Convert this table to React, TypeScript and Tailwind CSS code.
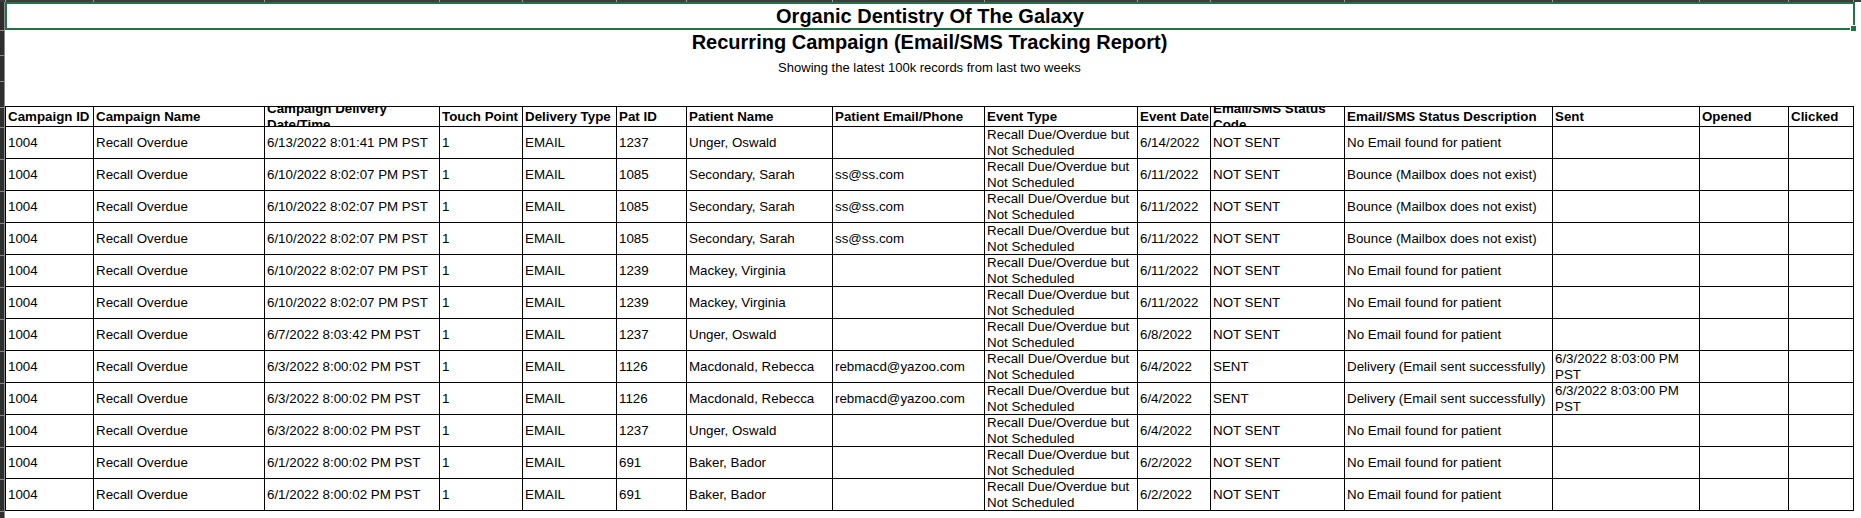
import React from "react";

// sheet column widths (px, each includes its right border)
const COLS =
  "grid-cols-[88px_171px_175px_83px_94px_70px_146px_152px_153px_73px_134px_208px_147px_89px_65px]";
const BAR_COLS =
  "grid-cols-[6px_88px_171px_175px_83px_94px_70px_146px_152px_153px_73px_134px_208px_147px_89px_65px_1fr]";

const HEAD = [
  "Campaign ID",
  "Campaign Name",
  "Campaign Delivery Date/Time",
  "Touch Point",
  "Delivery Type",
  "Pat ID",
  "Patient Name",
  "Patient Email/Phone",
  "Event Type",
  "Event Date",
  "Email/SMS Status Code",
  "Email/SMS Status Description",
  "Sent",
  "Opened",
  "Clicked",
];

type Row = {
  delivered: string;
  patId: string;
  name: string;
  email: string;
  eventDate: string;
  code: string;
  desc: string;
  sent?: string[];
};

const EVENT = "Recall Due/Overdue but Not Scheduled";
const NO_EMAIL = "No Email found for patient";
const BOUNCE = "Bounce (Mailbox does not exist)";
const DELIVERY = "Delivery (Email sent successfully)";

const ROWS: Row[] = [
  { delivered: "6/13/2022 8:01:41 PM PST", patId: "1237", name: "Unger, Oswald", email: "", eventDate: "6/14/2022", code: "NOT SENT", desc: NO_EMAIL },
  { delivered: "6/10/2022 8:02:07 PM PST", patId: "1085", name: "Secondary, Sarah", email: "ss@ss.com", eventDate: "6/11/2022", code: "NOT SENT", desc: BOUNCE },
  { delivered: "6/10/2022 8:02:07 PM PST", patId: "1085", name: "Secondary, Sarah", email: "ss@ss.com", eventDate: "6/11/2022", code: "NOT SENT", desc: BOUNCE },
  { delivered: "6/10/2022 8:02:07 PM PST", patId: "1085", name: "Secondary, Sarah", email: "ss@ss.com", eventDate: "6/11/2022", code: "NOT SENT", desc: BOUNCE },
  { delivered: "6/10/2022 8:02:07 PM PST", patId: "1239", name: "Mackey, Virginia", email: "", eventDate: "6/11/2022", code: "NOT SENT", desc: NO_EMAIL },
  { delivered: "6/10/2022 8:02:07 PM PST", patId: "1239", name: "Mackey, Virginia", email: "", eventDate: "6/11/2022", code: "NOT SENT", desc: NO_EMAIL },
  { delivered: "6/7/2022 8:03:42 PM PST", patId: "1237", name: "Unger, Oswald", email: "", eventDate: "6/8/2022", code: "NOT SENT", desc: NO_EMAIL },
  { delivered: "6/3/2022 8:00:02 PM PST", patId: "1126", name: "Macdonald, Rebecca", email: "rebmacd@yazoo.com", eventDate: "6/4/2022", code: "SENT", desc: DELIVERY, sent: ["6/3/2022 8:03:00 PM", "PST"] },
  { delivered: "6/3/2022 8:00:02 PM PST", patId: "1126", name: "Macdonald, Rebecca", email: "rebmacd@yazoo.com", eventDate: "6/4/2022", code: "SENT", desc: DELIVERY, sent: ["6/3/2022 8:03:00 PM", "PST"] },
  { delivered: "6/3/2022 8:00:02 PM PST", patId: "1237", name: "Unger, Oswald", email: "", eventDate: "6/4/2022", code: "NOT SENT", desc: NO_EMAIL },
  { delivered: "6/1/2022 8:00:02 PM PST", patId: "691", name: "Baker, Bador", email: "", eventDate: "6/2/2022", code: "NOT SENT", desc: NO_EMAIL },
  { delivered: "6/1/2022 8:00:02 PM PST", patId: "691", name: "Baker, Bador", email: "", eventDate: "6/2/2022", code: "NOT SENT", desc: NO_EMAIL },
];

// left row-header strip: heights of each sheet row
const ROW_HEIGHTS = [29, 25, 26, 26, 20, ...ROWS.map(() => 32)];

function ColumnBar() {
  return (
    <div className={`grid h-[2px] ${BAR_COLS} bg-[#3d3d3d]`}>
      {Array.from({ length: 17 }).map((_, i) => (
        <div key={i} className="border-r border-[#9a9a9a] last:border-r-0" />
      ))}
    </div>
  );
}

function RowBar() {
  return (
    <div className="flex w-[5px] shrink-0 flex-col border-r border-[#8a8a8a] bg-[#2e2e2e]">
      {ROW_HEIGHTS.map((h, i) => (
        <div key={i} className="shrink-0 border-b border-[#8a8a8a]" style={{ height: h }} />
      ))}
      <div className="flex-1" />
    </div>
  );
}

function Cell({ children, head }: { children?: React.ReactNode; head?: boolean }) {
  return (
    <div
      className={
        "flex items-center overflow-hidden border-r border-b border-black pl-[2px] pr-[1px] text-[13.33px] leading-[16px] " +
        (head ? "h-[20px] font-bold" : "h-[32px]")
      }
    >
      <div>{children}</div>
    </div>
  );
}

export default function App() {
  return (
    <div className="flex h-[518px] flex-col overflow-hidden bg-white font-['Liberation_Sans',Arial,sans-serif] text-black">
      <ColumnBar />
      <div className="flex flex-1">
        <RowBar />
        <div className="flex flex-col">
          <div className="relative flex h-[28px] w-[1850px] items-center justify-center border-2 border-[#217346] text-[20px] font-bold leading-[23px]">
            Organic Dentistry Of The Galaxy
            <span className="absolute -bottom-[3px] -right-[3px] h-[5px] w-[5px] bg-[#217346] outline outline-1 outline-white" />
          </div>
          <div className="flex h-[24px] w-[1849px] items-center justify-center text-[20px] font-bold leading-[23px]">
            Recurring Campaign (Email/SMS Tracking Report)
          </div>
          <div className="flex h-[26px] w-[1849px] items-center justify-center text-[13px] leading-[15px]">
            Showing the latest 100k records from last two weeks
          </div>
          <div className="h-[26px]" />

          <div className={`grid w-fit ${COLS} border-l border-t border-black`}>
            {HEAD.map((h) => (
              <Cell key={h} head>
                {h}
              </Cell>
            ))}
            {ROWS.map((r, i) => (
              <React.Fragment key={i}>
                <Cell>1004</Cell>
                <Cell>Recall Overdue</Cell>
                <Cell>{r.delivered}</Cell>
                <Cell>1</Cell>
                <Cell>EMAIL</Cell>
                <Cell>{r.patId}</Cell>
                <Cell>{r.name}</Cell>
                <Cell>{r.email}</Cell>
                <Cell>{EVENT}</Cell>
                <Cell>{r.eventDate}</Cell>
                <Cell>{r.code}</Cell>
                <Cell>{r.desc}</Cell>
                <Cell>
                  {r.sent?.map((line) => (
                    <span key={line} className="block">
                      {line}
                    </span>
                  ))}
                </Cell>
                <Cell />
                <Cell />
              </React.Fragment>
            ))}
          </div>
        </div>
      </div>
    </div>
  );
}
